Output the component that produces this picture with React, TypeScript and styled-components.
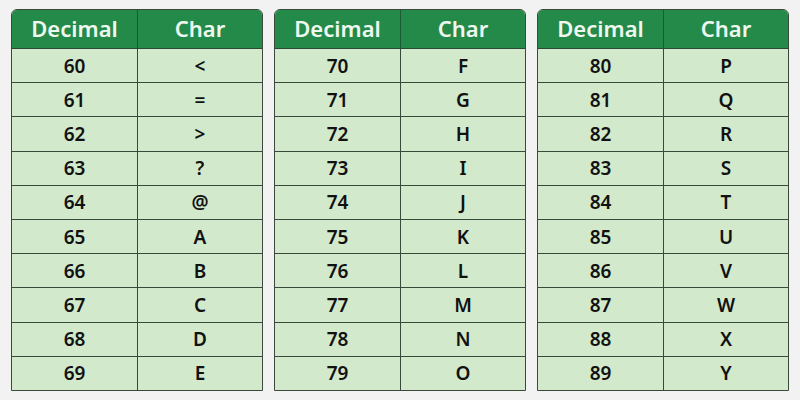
import styled, { createGlobalStyle } from "styled-components";

const GlobalStyle = createGlobalStyle`
  html, body {
    margin: 0;
    padding: 0;
    background: #f2f2f2;
  }
`;

const groups = [60, 70, 80].map((start) =>
  Array.from({ length: 10 }, (_, i) => ({
    code: start + i,
    char: String.fromCharCode(start + i),
  }))
);

const App = () => {
  return (
    <>
      <GlobalStyle />
      <Page>
        {groups.map((rows) => (
          <Table key={rows[0].code}>
            <thead>
              <tr>
                <th>Decimal</th>
                <th>Char</th>
              </tr>
            </thead>
            <tbody>
              {rows.map((row) => (
                <tr key={row.code}>
                  <td>{row.code}</td>
                  <td>{row.char}</td>
                </tr>
              ))}
            </tbody>
          </Table>
        ))}
      </Page>
    </>
  );
};

export default App;

const Page = styled.main`
  width: 800px;
  height: 400px;
  box-sizing: border-box;
  padding: 9px 11px 0;
  display: flex;
  gap: 11px;
  align-items: flex-start;
  font-family: "Noto Sans", "Open Sans", sans-serif;
`;

const Table = styled.table`
  width: 252px;
  table-layout: fixed;
  border-collapse: separate;
  border-spacing: 0;
  border: 1.5px solid #3a4a3a;
  border-radius: 6px 6px 0 0;
  overflow: hidden;
  background: #d3e9cb;

  thead {
    background: #248a4a;
  }

  th {
    height: 35.5px;
    padding: 0 0 2.5px;
    color: #eef8ee;
    font-size: 22px;
    font-weight: 600;
    text-align: center;
    border-bottom: 1.5px solid #2b4a33;
  }

  th:first-child,
  td:first-child {
    width: 125px;
    border-right: 1.5px solid #3a4a3a;
  }

  th:first-child {
    border-right-color: #1c5a32;
  }

  td {
    height: 33.2px;
    padding: 0;
    color: #111;
    font-size: 19px;
    font-weight: 600;
    text-align: center;
    border-top: 1.5px solid #3a4a3a;
  }

  tbody tr:first-child td {
    border-top: none;
  }
`;
